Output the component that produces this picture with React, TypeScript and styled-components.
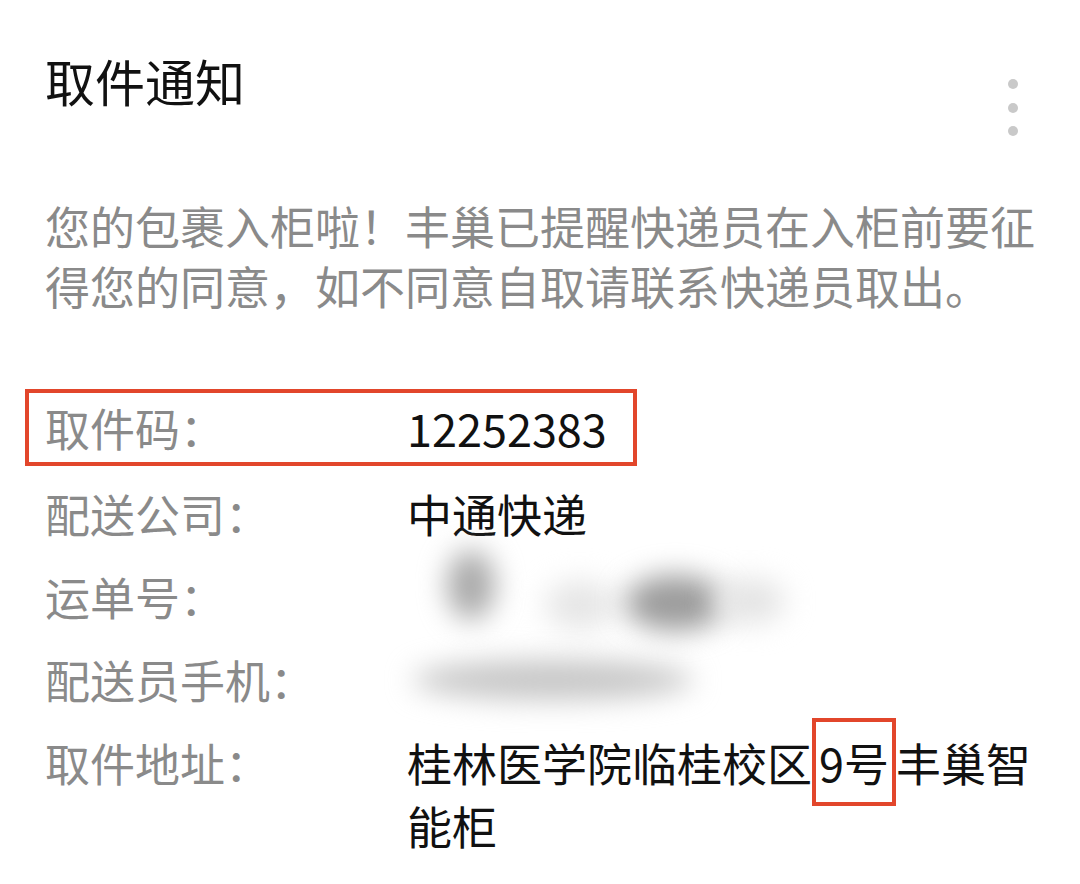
import React from 'react';
import styled, { createGlobalStyle } from 'styled-components';

const GlobalStyle = createGlobalStyle`
    html, body {
        margin: 0;
        padding: 0;
        background: #ffffff;
    }
    body {
        font-family: 'Noto Sans CJK SC', 'Noto Sans', sans-serif;
    }
`;

const Page = styled.div`
    width: 1080px;
    height: 884px;
    overflow: hidden;
    box-sizing: border-box;
    padding: 50px 40px 0 45px;
    background: #ffffff;
`;

const Header = styled.div`
    display: flex;
    justify-content: space-between;
    align-items: flex-start;
    height: 60px;
`;

const Title = styled.h1`
    margin: 0;
    font-size: 50px;
    line-height: 60px;
    font-weight: 400;
    color: #111111;
`;

const MoreButton = styled.div`
    display: flex;
    flex-direction: column;
    gap: 13.5px;
    margin: 29px 22px 0 0;
`;

const Dot = styled.span`
    width: 10px;
    height: 10px;
    border-radius: 50%;
    background: #c9c9c9;
`;

const Message = styled.p`
    margin: 86px 0 0;
    font-size: 45px;
    line-height: 60px;
    color: #8a8a8a;
`;

const Details = styled.div`
    display: flex;
    flex-direction: column;
    align-items: flex-start;
    gap: 20px;
    margin-top: 73px;
`;

const Row = styled.div`
    display: grid;
    grid-template-columns: 362px 633px;
    font-size: 45px;
    line-height: 63px;
`;

const HighlightRow = styled(Row)`
    grid-template-columns: 362px auto;
    margin: 0 0 -4px -20px;
    padding: 3px 26px 3px 16px;
    border: 4px solid #e2462b;
`;

const Label = styled.span`
    color: #8a8a8a;
`;

const Value = styled.span`
    color: #111111;
`;

const Mark = styled.span`
    padding: 8px 3px 7px;
    border: 4px solid #e2462b;
`;

const Redacted = styled.span`
    display: flex;
    align-items: center;
    height: 63px;
`;

const Blob = styled.span<{ $w: number; $h: number; $shade: string; $ml: number; $dy?: number }>`
    display: block;
    flex: none;
    width: ${(p) => p.$w}px;
    height: ${(p) => p.$h}px;
    margin-left: ${(p) => p.$ml}px;
    transform: translateY(${(p) => p.$dy ?? 0}px);
    border-radius: 50%;
    background: ${(p) => p.$shade};
    filter: blur(14px);
`;

export default function App() {
    return (
        <>
            <GlobalStyle />
            <Page>
                <Header>
                    <Title>取件通知</Title>
                    <MoreButton>
                        <Dot />
                        <Dot />
                        <Dot />
                    </MoreButton>
                </Header>
                <Message>
                    您的包裹入柜啦！丰巢已提醒快递员在入柜前要征得您的同意，如不同意自取请联系快递员取出。
                </Message>
                <Details>
                    <HighlightRow>
                        <Label>取件码：</Label>
                        <Value>12252383</Value>
                    </HighlightRow>
                    <Row>
                        <Label>配送公司：</Label>
                        <Value>中通快递</Value>
                    </Row>
                    <Row>
                        <Label>运单号：</Label>
                        <Redacted>
                            <Blob $w={48} $h={70} $shade="#a9a9a9" $ml={40} $dy={-12} />
                            <Blob $w={70} $h={50} $shade="#e6e6e6" $ml={50} $dy={8} />
                            <Blob $w={100} $h={56} $shade="#9c9c9c" $ml={10} $dy={6} />
                            <Blob $w={70} $h={46} $shade="#e4e4e4" $ml={-10} $dy={4} />
                        </Redacted>
                    </Row>
                    <Row>
                        <Label>配送员手机：</Label>
                        <Redacted>
                            <Blob $w={280} $h={40} $shade="#c6c6c6" $ml={6} $dy={0} />
                        </Redacted>
                    </Row>
                    <Row>
                        <Label>取件地址：</Label>
                        <Value>
                            桂林医学院临桂校区<Mark>9号</Mark>丰巢智能柜
                        </Value>
                    </Row>
                </Details>
            </Page>
        </>
    );
}
